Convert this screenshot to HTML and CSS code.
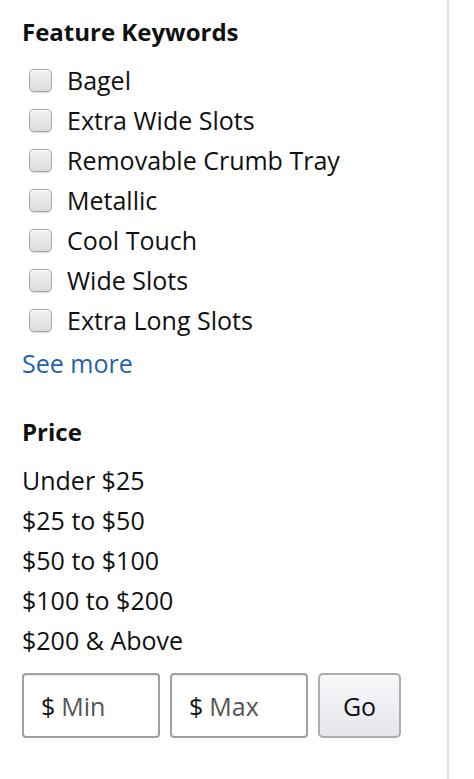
FILE: index.html
```html
<!DOCTYPE html>
<html>
<head>
<meta charset="utf-8">
<link rel="stylesheet" href="styles.css">
</head>
<body>
<div class="panel">
  <section class="group">
    <h2 class="group-title">Feature Keywords</h2>
    <ul class="check-list">
      <li class="check-item"><span class="box"></span><span class="label">Bagel</span></li>
      <li class="check-item"><span class="box"></span><span class="label">Extra Wide Slots</span></li>
      <li class="check-item"><span class="box"></span><span class="label">Removable Crumb Tray</span></li>
      <li class="check-item"><span class="box"></span><span class="label">Metallic</span></li>
      <li class="check-item"><span class="box"></span><span class="label">Cool Touch</span></li>
      <li class="check-item"><span class="box"></span><span class="label">Wide Slots</span></li>
      <li class="check-item"><span class="box"></span><span class="label">Extra Long Slots</span></li>
    </ul>
    <a class="see-more" href="#">See more</a>
  </section>
  <section class="group price">
    <h2 class="group-title">Price</h2>
    <ul class="price-list">
      <li class="price-item">Under $25</li>
      <li class="price-item">$25 to $50</li>
      <li class="price-item">$50 to $100</li>
      <li class="price-item">$100 to $200</li>
      <li class="price-item">$200 &amp; Above</li>
    </ul>
    <div class="range">
      <label class="field"><span class="cur">$</span><span class="ph">Min</span></label>
      <label class="field"><span class="cur">$</span><span class="ph">Max</span></label>
      <button class="go">Go</button>
    </div>
  </section>
</div>
</body>
</html>
```
FILE: styles.css
```css
* { box-sizing: border-box; }
html, body { margin: 0; padding: 0; background: #fff; }
body {
  font-family: "Open Sans", "Noto Sans", sans-serif;
  color: #0f1111;
  width: 474px;
  height: 779px;
  overflow: hidden;
}
.panel {
  width: 449px;
  height: 779px;
  border-right: 2px solid #dedede;
  padding: 15px 0 0 22px;
}
.group-title {
  margin: 0;
  font-size: 24px;
  line-height: 34px;
  font-weight: 700;
}
.check-list, .price-list {
  list-style: none;
  margin: 0;
  padding: 0;
}
.check-list { margin-top: 11px; }
.check-item {
  display: flex;
  align-items: center;
  height: 40px;
}
.box {
  width: 23px;
  height: 23px;
  margin-left: 7px;
  margin-right: 15px;
  border: 1.5px solid #a6a6a6;
  border-radius: 5px;
  background: linear-gradient(#f3f3f3, #dcdcdc);
  box-shadow: 0 1px 1px rgba(0,0,0,0.15), inset 0 1px 0 #fff;
}
.label {
  font-size: 25px;
}
.see-more {
  display: block;
  margin-top: 3px;
  font-size: 25px;
  line-height: 40px;
  color: #1f62ad;
  text-decoration: none;
}
.price { margin-top: 32px; }
.price-list { margin-top: 11px; }
.price-item {
  font-size: 25px;
  line-height: 40px;
}
.range {
  display: flex;
  gap: 10px;
  margin-top: 13px;
}
.field {
  width: 138px;
  height: 65px;
  border: 2px solid #a0a0a0;
  border-radius: 4px;
  display: flex;
  align-items: center;
  padding-left: 17px;
  font-size: 25px;
  gap: 6px;
  box-shadow: inset 0 1px 1px rgba(0,0,0,0.08);
}
.cur { color: #111; }
.ph { color: #555; }
.go {
  width: 83px;
  height: 65px;
  border: 2px solid #a9acb1;
  border-radius: 5px;
  background: linear-gradient(#f7f8fa, #e4e6ea);
  font-family: inherit;
  font-size: 25px;
  color: #111;
  padding: 0;
  box-shadow: 0 1px 0 rgba(255,255,255,0.6) inset;
}
```
